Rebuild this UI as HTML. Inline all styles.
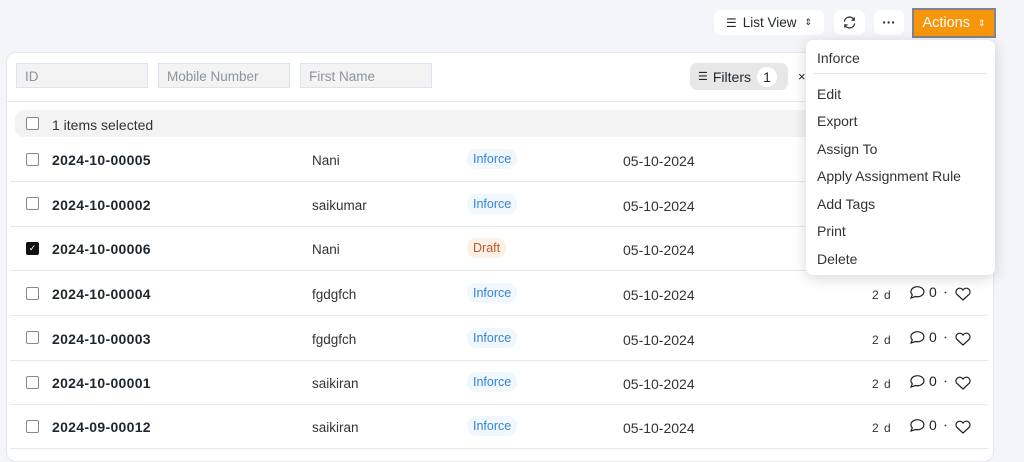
<!DOCTYPE html>
<html><head><style>
*{box-sizing:border-box;margin:0;padding:0}
body{width:1024px;height:455px;overflow:hidden;background:#f3f5f9;font-family:"Liberation Sans",sans-serif;color:#1f272e;position:relative;font-size:13px}
.abs{position:absolute}
.btn{position:absolute;background:#fff;border-radius:7px;height:25px;top:10px;display:flex;align-items:center;justify-content:center;font-size:13.5px;color:#1f272e}
.card{left:6px;top:52px;width:988px;height:410px;background:#fff;border:1px solid #e4e8ee;border-radius:10px}
.inp{top:63px;height:25px;width:132px;background:#f3f3f3;border:1px solid #dbe3ee;color:#8d949c;font-size:13.5px;padding:5px 8px}
.cb{width:13px;height:13px;border:1px solid #888;border-radius:2px;background:#fff}
.row{position:absolute;left:10px;width:978px;height:45px;border-bottom:1px solid #e5e9ef}
.row>*{position:absolute}
.id{left:42px;top:15px;font-weight:bold;font-size:14px;letter-spacing:0.3px}
.nm{left:302px;top:16px;font-size:13.5px;color:#333}
.pill{left:457px;top:12px;padding:3px 6px;border-radius:9px;font-size:12.5px;background:#f0f7fd;color:#3583d8}
.dt{left:613px;top:16px;font-size:14px;color:#333}
.ago{left:862px;top:17px;font-size:12px;letter-spacing:1px;color:#333}
.cm{left:897px;top:13px}
.menu{left:806px;top:40px;width:189px;height:235px;background:#fff;border-radius:7px;box-shadow:0 3px 14px rgba(0,0,0,.16)}
.mi{position:absolute;left:11px;font-size:14px;color:#333}
</style></head><body>
<div class="btn" style="left:714px;width:110px"><span style="margin-right:6px;font-size:12px">☰</span>List View <span style="margin-left:8px;font-size:9px">⇕</span></div>
<div class="btn" style="left:834px;width:31px"><svg width="15" height="15" viewBox="0 0 16 16" fill="none" stroke="#333" stroke-width="1.4"><path d="M2.5 7A5.5 5.5 0 0 1 13 5.5M13.5 9A5.5 5.5 0 0 1 3 10.5M13 2.5v3h-3M3 13.5v-3h3"/></svg></div>
<div class="btn" style="left:874px;width:30px;font-weight:bold">···</div>
<div class="abs" style="left:912px;top:8px;width:84px;height:30px;background:#f7960b;border:2px solid #7c8590;color:#fff;font-size:14.5px;display:flex;align-items:center;justify-content:center">Actions <span style="margin-left:8px;font-size:9px">⇕</span></div>
<div class="abs card"></div>
<div class="abs inp" style="left:16px">ID</div>
<div class="abs inp" style="left:158px">Mobile Number</div>
<div class="abs inp" style="left:300px">First Name</div>
<div class="abs" style="left:690px;top:63px;width:98px;height:27px;background:#e7e7e7;border-radius:7px;display:flex;align-items:center;padding-left:8px;font-size:14px"><span style="font-size:11px;margin-right:5px">☰</span>Filters<span style="margin-left:6px;background:#fff;border-radius:10px;width:20px;height:20px;display:inline-flex;align-items:center;justify-content:center">1</span></div>
<div class="abs" style="left:798px;top:69px;font-size:13px">×</div>
<div class="abs" style="left:6px;top:101px;width:988px;border-top:1px solid #e5e9ef"></div>
<div class="abs" style="left:15px;top:110px;width:980px;height:27px;background:#f3f3f3;border-radius:9px"></div>
<div class="abs cb" style="left:26px;top:117px"></div>
<div class="abs" style="left:52px;top:117px;font-size:14px;color:#333">1 items selected</div>

<div class="row" style="top:137px"><div class="cb" style="left:16px;top:16px"></div><div class="id">2024-10-00005</div><div class="nm">Nani</div><div class="pill">Inforce</div><div class="dt">05-10-2024</div></div>
<div class="row" style="top:182px"><div class="cb" style="left:16px;top:15px"></div><div class="id">2024-10-00002</div><div class="nm">saikumar</div><div class="pill">Inforce</div><div class="dt">05-10-2024</div></div>
<div class="row" style="top:226px"><div class="cb" style="left:16px;top:16px;background:#111;border-color:#111;color:#fff;font-size:9px;line-height:11px;text-align:center">✓</div><div class="id">2024-10-00006</div><div class="nm">Nani</div><div class="pill" style="background:#fdf0e5;color:#c0582a">Draft</div><div class="dt">05-10-2024</div></div>
<div class="row" style="top:271px"><div class="cb" style="left:16px;top:16px"></div><div class="id">2024-10-00004</div><div class="nm">fgdgfch</div><div class="pill">Inforce</div><div class="dt">05-10-2024</div><div class="ago">2 d</div><div class="cm">CM</div></div>
<div class="row" style="top:316px"><div class="cb" style="left:16px;top:15px"></div><div class="id">2024-10-00003</div><div class="nm">fgdgfch</div><div class="pill">Inforce</div><div class="dt">05-10-2024</div><div class="ago">2 d</div><div class="cm">CM</div></div>
<div class="row" style="top:360px"><div class="cb" style="left:16px;top:16px"></div><div class="id">2024-10-00001</div><div class="nm">saikiran</div><div class="pill">Inforce</div><div class="dt">05-10-2024</div><div class="ago">2 d</div><div class="cm">CM</div></div>
<div class="row" style="top:404px"><div class="cb" style="left:16px;top:16px"></div><div class="id">2024-09-00012</div><div class="nm">saikiran</div><div class="pill">Inforce</div><div class="dt">05-10-2024</div><div class="ago">2 d</div><div class="cm">CM</div></div>

<div class="abs menu">
<div class="mi" style="top:10px">Inforce</div>
<div class="abs" style="left:8px;top:33px;width:172px;border-top:1px solid #dde1ea"></div>
<div class="mi" style="top:46px">Edit</div>
<div class="mi" style="top:73px">Export</div>
<div class="mi" style="top:101px">Assign To</div>
<div class="mi" style="top:128px">Apply Assignment Rule</div>
<div class="mi" style="top:156px">Add Tags</div>
<div class="mi" style="top:183px">Print</div>
<div class="mi" style="top:211px">Delete</div>
</div>
<script>
document.querySelectorAll('.cm').forEach(e=>{e.innerHTML='<svg width="70" height="20" viewBox="0 0 70 20" fill="none" stroke="#222" stroke-width="1.2"><path d="M4 15l1.3-3.2A6.5 5 0 1 1 8.5 13.5z"/><text x="22" y="14" fill="#222" stroke="none" font-size="14" font-family="Liberation Sans">0</text><circle cx="38.5" cy="9.5" r="0.9" fill="#222" stroke="none"/><path d="M56 17l-6.5-6a3.5 3.5 0 0 1 6.5-4a3.5 3.5 0 0 1 6.5 4z"/></svg>';e.style.top='12px'});
</script>
</body></html>
